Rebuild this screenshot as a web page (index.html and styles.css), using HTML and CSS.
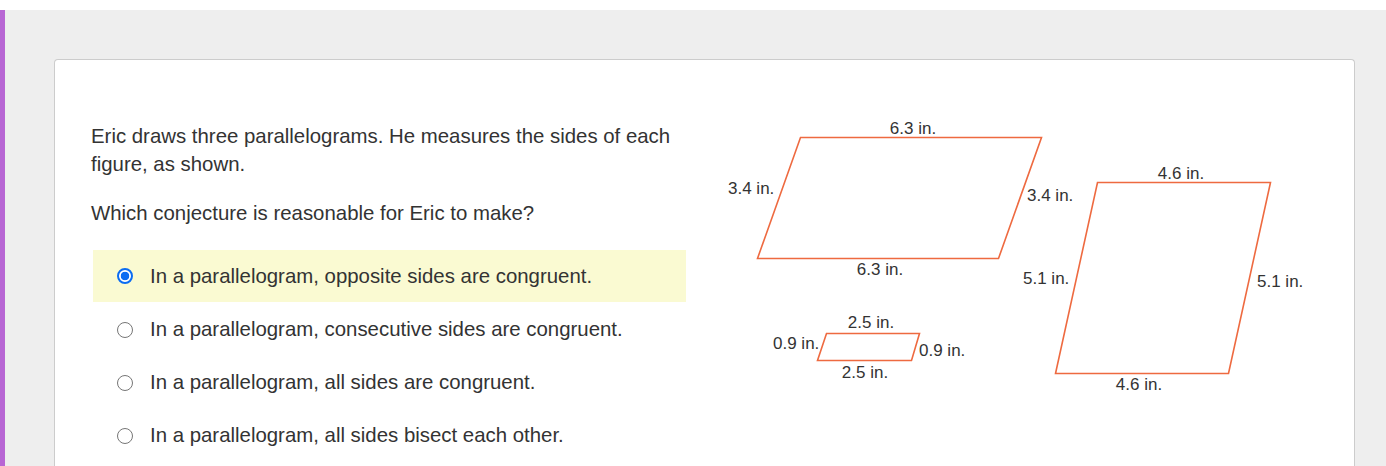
FILE: index.html
```html
<!DOCTYPE html>
<html>
<head>
<meta charset="utf-8">
<link rel="stylesheet" href="styles.css">
</head>
<body>
<div class="topstrip"></div>
<div class="stage">
  <div class="accent"></div>
  <div class="main">
    <div class="card">
      <div class="question">
        <p class="prompt">Eric draws three parallelograms. He measures the sides of each figure, as shown.</p>
        <p class="prompt ask">Which conjecture is reasonable for Eric to make?</p>
        <div class="options">
          <div class="option selected"><span class="radio on"></span><span>In a parallelogram, opposite sides are congruent.</span></div>
          <div class="option"><span class="radio"></span><span>In a parallelogram, consecutive sides are congruent.</span></div>
          <div class="option"><span class="radio"></span><span>In a parallelogram, all sides are congruent.</span></div>
          <div class="option"><span class="radio"></span><span>In a parallelogram, all sides bisect each other.</span></div>
        </div>
      </div>
      <div class="figure">
        <svg width="600" height="300" viewBox="720 105 600 300" xmlns="http://www.w3.org/2000/svg">
          <g fill="none" stroke="#ee6a40" stroke-width="1.6" stroke-linejoin="miter">
            <polygon points="800.5,137.5 1041.5,137.5 998.5,258.5 757.5,258.5"/>
            <polygon points="1097.5,182.5 1270.5,182.5 1228.5,373.5 1055.5,373.5"/>
            <polygon points="826.5,333.5 919.5,333.5 911.5,360.5 817.5,360.5"/>
          </g>
          <g fill="#333" font-family="Liberation Sans, Arial, sans-serif" font-size="17">
            <text x="913" y="134" text-anchor="middle">6.3 in.</text>
            <text x="728" y="194">3.4 in.</text>
            <text x="1027" y="201">3.4 in.</text>
            <text x="880" y="275" text-anchor="middle">6.3 in.</text>
            <text x="1181" y="179" text-anchor="middle">4.6 in.</text>
            <text x="1023" y="284">5.1 in.</text>
            <text x="1257" y="287">5.1 in.</text>
            <text x="1139" y="390" text-anchor="middle">4.6 in.</text>
            <text x="871" y="328" text-anchor="middle">2.5 in.</text>
            <text x="773" y="349">0.9 in.</text>
            <text x="919" y="356">0.9 in.</text>
            <text x="865" y="378" text-anchor="middle">2.5 in.</text>
          </g>
        </svg>
      </div>
    </div>
  </div>
</div>
</body>
</html>
```

FILE: styles.css
```css
html, body {
  margin: 0;
  padding: 0;
  background: #ffffff;
  height: 100%;
  overflow: hidden;
}
body {
  font-family: "Liberation Sans", Arial, sans-serif;
  color: #333333;
}
.topstrip {
  height: 10px;
  background: #ffffff;
}
.stage {
  display: flex;
  background: #eeeeee;
  height: 456px;
}
.accent {
  width: 5px;
  background: #b866d4;
  flex: none;
}
.main {
  flex: 1;
  padding: 49px 31px 0 49px;
}
.card {
  background: #ffffff;
  border: 1px solid #cccccc;
  border-bottom: none;
  border-radius: 4px 4px 0 0;
  height: 420px;
  display: flex;
  padding: 0 0 0 36px;
}
.question {
  width: 595px;
  padding-top: 62px;
  flex: none;
}
.prompt {
  margin: 0 0 21px 0;
  font-size: 20.4px;
  line-height: 28px;
}
.ask {
  margin-bottom: 23px;
}
.options {
  margin-left: 2px;
}
.option {
  display: flex;
  align-items: center;
  height: 53px;
  padding-left: 24px;
  font-size: 20.4px;
}
.option.selected {
  background: #fafad2;
  height: 52px;
  margin-bottom: 1px;
}
.radio {
  width: 16px;
  height: 16px;
  box-sizing: border-box;
  border: 1px solid #767676;
  border-radius: 50%;
  margin-right: 17px;
  flex: none;
  background: #fff;
}
.radio.on {
  border: 2px solid #0b6cf2;
  background: radial-gradient(circle, #0b6cf2 0 4px, #ffffff 4.6px);
}
.figure {
  flex: 1;
  padding: 45px 0 0 34px;
}
.figure svg {
  display: block;
}
```
